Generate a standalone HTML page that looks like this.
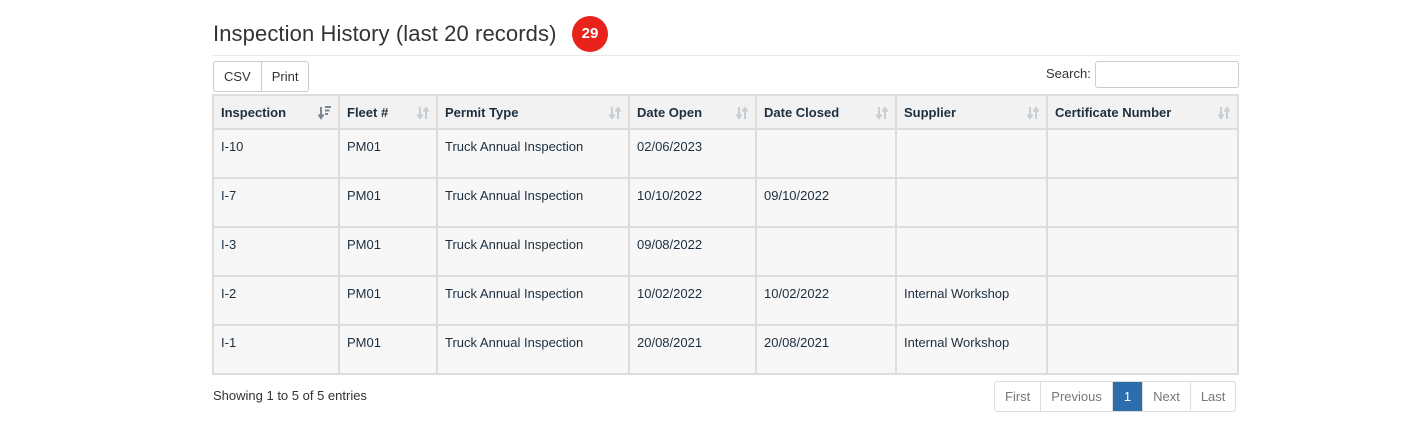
<!DOCTYPE html>
<html><head><style>
body{margin:0;width:1406px;height:432px;background:#fff;font-family:"Liberation Sans",Arial,sans-serif;position:relative;overflow:hidden}
.a{position:absolute}
h1{position:absolute;left:213px;top:20px;margin:0;font-size:22px;font-weight:normal;color:#333;line-height:28px;letter-spacing:0.1px}
.badge{left:572px;top:16px;width:36px;height:36px;border-radius:50%;background:#e8231c;color:#fff;font-weight:bold;font-size:15px;text-align:center;line-height:36px}
.hr{left:213px;top:55px;width:1026px;height:1px;background:#e8e8e8}
.btns{left:213px;top:61px;height:29px;border:1px solid #ccc;border-radius:3px;display:flex;font-size:13px;color:#333}
.btns div{padding:0 10px;line-height:29px}
.btns div+div{border-left:1px solid #ccc}
table{position:absolute;left:212px;top:94px;border-collapse:collapse;font-size:13px;color:#1d2f3f;width:1027px}
td,th{border:2px solid #ddd;text-align:left;vertical-align:top;padding:8px 7px}
th{background:#f2f2f2;height:15px;font-weight:bold;position:relative;padding:9px 7px 8px}
td{background:#f7f7f7;height:29px;padding:9px 7px 9px}
.s{position:absolute;right:7px;top:10px}
.pg{left:994px;top:381px;height:29px;border:1px solid #ddd;border-radius:3px;display:flex;font-size:13px;color:#777}
.pg div{padding:0 10px;line-height:29px;border-left:1px solid #ddd}
.pg div:first-child{border-left:none}
</style></head><body>
<h1>Inspection History (last 20 records)</h1>
<div class="a badge">29</div>
<div class="a hr"></div>
<div class="a btns"><div>CSV</div><div>Print</div></div>
<div class="a" style="left:1046px;top:66px;font-size:13px;color:#333">Search:</div>
<div class="a" style="left:1095px;top:61px;width:142px;height:25px;border:1px solid #ccc;border-radius:3px"></div>
<svg width="0" height="0" style="position:absolute"><defs>
<g id="ud"><path d="M3 1v10M0.5 8.5L3 12l2.5-3.5M9 13V3M6.5 5.5L9 2l2.5 3.5" stroke="#c8cfd4" stroke-width="2" fill="none"/></g>
<g id="dn"><path d="M3 1v10M0.5 8.5L3 12l2.5-3.5" stroke="#7d868e" stroke-width="2" fill="none"/><path d="M7 1h6M7 4.5h4.5M7 8h3" stroke="#7d868e" stroke-width="2"/></g>
</defs></svg>
<table>
<colgroup><col style="width:126px"><col style="width:98px"><col style="width:192px"><col style="width:127px"><col style="width:140px"><col style="width:151px"><col></colgroup>
<tr><th>Inspection<svg class="s" width="13" height="14"><use href="#dn"/></svg></th><th>Fleet #<svg class="s" width="12" height="14"><use href="#ud"/></svg></th><th>Permit Type<svg class="s" width="12" height="14"><use href="#ud"/></svg></th><th>Date Open<svg class="s" width="12" height="14"><use href="#ud"/></svg></th><th>Date Closed<svg class="s" width="12" height="14"><use href="#ud"/></svg></th><th>Supplier<svg class="s" width="12" height="14"><use href="#ud"/></svg></th><th>Certificate Number<svg class="s" width="12" height="14"><use href="#ud"/></svg></th></tr>
<tr><td>I-10</td><td>PM01</td><td>Truck Annual Inspection</td><td>02/06/2023</td><td></td><td></td><td></td></tr>
<tr><td>I-7</td><td>PM01</td><td>Truck Annual Inspection</td><td>10/10/2022</td><td>09/10/2022</td><td></td><td></td></tr>
<tr><td>I-3</td><td>PM01</td><td>Truck Annual Inspection</td><td>09/08/2022</td><td></td><td></td><td></td></tr>
<tr><td>I-2</td><td>PM01</td><td>Truck Annual Inspection</td><td>10/02/2022</td><td>10/02/2022</td><td>Internal Workshop</td><td></td></tr>
<tr><td>I-1</td><td>PM01</td><td>Truck Annual Inspection</td><td>20/08/2021</td><td>20/08/2021</td><td>Internal Workshop</td><td></td></tr>
</table>
<div class="a" style="left:213px;top:388px;font-size:13px;color:#333">Showing 1 to 5 of 5 entries</div>
<div class="a pg"><div>First</div><div>Previous</div><div style="background:#2c6ead;color:#fff;padding:0 11px">1</div><div>Next</div><div>Last</div></div>
</body></html>
